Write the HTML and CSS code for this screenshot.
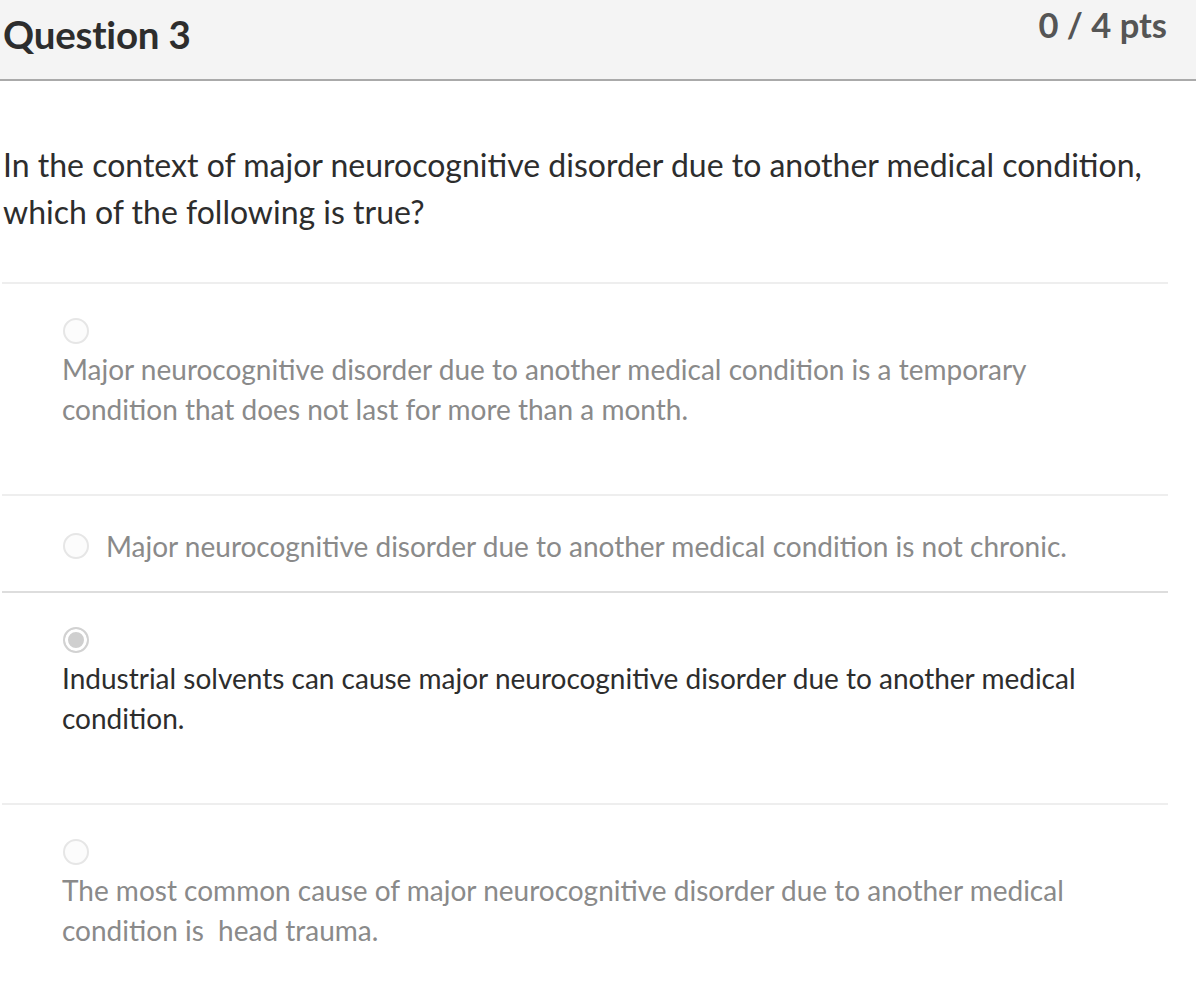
FILE: index.html
```html
<!DOCTYPE html>
<html>
<head>
<meta charset="utf-8">
<link rel="stylesheet" href="styles.css">
</head>
<body>
<div class="question">
  <div class="header">
    <h2 class="title">Question 3</h2>
    <div class="pts">0 / 4 pts</div>
  </div>
  <div class="content">
    <div class="prompt">In the context of major neurocognitive disorder due to another medical condition, which of the following is true?</div>
    <div class="answers">
      <div class="answer stacked">
        <span class="radio"></span>
        <div class="text muted">Major neurocognitive disorder due to another medical condition is a temporary condition that does not last for more than a month.</div>
      </div>
      <div class="answer inline">
        <span class="radio"></span>
        <div class="text muted">Major neurocognitive disorder due to another medical condition is not chronic.</div>
      </div>
      <div class="answer stacked selected">
        <span class="radio checked"></span>
        <div class="text">Industrial solvents can cause major neurocognitive disorder due to another medical condition.</div>
      </div>
      <div class="answer stacked last">
        <span class="radio"></span>
        <div class="text muted">The most common cause of major neurocognitive disorder due to another medical condition is&nbsp; head trauma.</div>
      </div>
    </div>
  </div>
</div>
</body>
</html>
```
FILE: styles.css
```css
html, body {
  margin: 0;
  padding: 0;
  background: #ffffff;
  font-family: "Lato", "Noto Sans", sans-serif;
}

.header {
  height: 79px;
  background: #f4f4f4;
  border-bottom: 2px solid #aaaaaa;
  display: flex;
  justify-content: space-between;
  align-items: flex-start;
  padding: 0 29px 0 3px;
}

.title {
  margin: 0;
  padding-top: 11px;
  font-size: 38.5px;
  line-height: 46px;
  font-weight: 700;
  color: #2d2d2d;
  letter-spacing: -0.2px;
}

.pts {
  padding-top: 2px;
  font-size: 34.5px;
  line-height: 46px;
  font-weight: 700;
  color: #555555;
}

.content {
  margin: 0 28px 0 2px;
}

.prompt {
  padding: 60px 0 47px 1px;
  font-size: 32px;
  line-height: 47px;
  color: #2d2d2d;
  border-bottom: 2px solid #eeeeee;
}

.answer {
  border-bottom: 2px solid #eeeeee;
  padding: 0 60px;
}

.answer.last {
  border-bottom: none;
}

.answer.stacked {
  display: flex;
  flex-direction: column;
  align-items: flex-start;
  padding-top: 34px;
  padding-bottom: 65px;
}

.answer.stacked .text {
  margin-top: 5px;
}

.answer.inline {
  display: flex;
  align-items: center;
  gap: 17px;
  padding-top: 30px;
  padding-bottom: 25px;
  border-bottom-color: #dddddd;
}

.radio {
  display: block;
  width: 22px;
  height: 22px;
  border-radius: 50%;
  border: 2px solid #e6e6e6;
  background: #fcfcfc;
  flex: none;
  margin-left: 1px;
}

.radio.checked {
  border-color: #d2d2d2;
  background: #cfcfcf;
  box-shadow: inset 0 0 0 3px #ffffff;
}

.text {
  font-size: 28px;
  line-height: 40px;
  color: #2d2d2d;
}

.text.muted {
  color: #8a8a8a;
}
```
